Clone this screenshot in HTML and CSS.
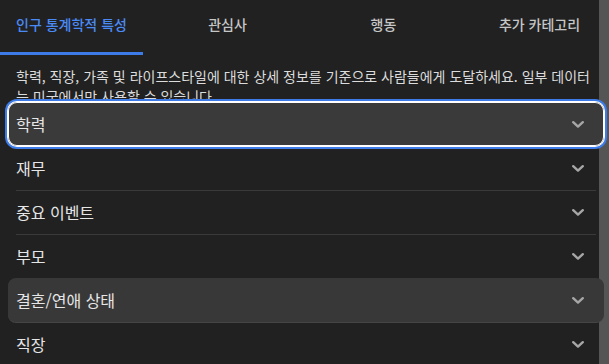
FILE: index.html
```html
<!DOCTYPE html>
<html lang="ko">
<head>
<meta charset="utf-8">
<title>카테고리</title>
<link rel="stylesheet" href="styles.css">
</head>
<body>
<div class="app">
  <div class="scrollbar"></div>
  <div class="panel">
    <nav class="tabs">
      <div class="tab active">인구 통계학적 특성</div>
      <div class="tab">관심사</div>
      <div class="tab">행동</div>
      <div class="tab">추가 카테고리</div>
    </nav>
    <p class="desc">학력, 직장, 가족 및 라이프스타일에 대한 상세 정보를 기준으로 사람들에게 도달하세요. 일부 데이터는 미국에서만 사용할 수 있습니다.</p>
    <div class="list">
      <div class="row focused"><span class="label">학력</span><svg class="chev" viewBox="0 0 12 7"><path d="M1.2 1.2 6 5.6 10.8 1.2"/></svg></div>
      <div class="row"><span class="label">재무</span><svg class="chev" viewBox="0 0 12 7"><path d="M1.2 1.2 6 5.6 10.8 1.2"/></svg></div>
      <div class="row sep"><span class="label">중요 이벤트</span><svg class="chev" viewBox="0 0 12 7"><path d="M1.2 1.2 6 5.6 10.8 1.2"/></svg></div>
      <div class="row sep"><span class="label">부모</span><svg class="chev" viewBox="0 0 12 7"><path d="M1.2 1.2 6 5.6 10.8 1.2"/></svg></div>
      <div class="row hover"><span class="label">결혼/연애 상태</span><svg class="chev" viewBox="0 0 12 7"><path d="M1.2 1.2 6 5.6 10.8 1.2"/></svg></div>
      <div class="row"><span class="label">직장</span><svg class="chev" viewBox="0 0 12 7"><path d="M1.2 1.2 6 5.6 10.8 1.2"/></svg></div>
    </div>
  </div>
</div>
</body>
</html>
```
FILE: styles.css
```css
html, body {
  margin: 0;
  padding: 0;
  background: #212121;
}
body {
  font-family: "Noto Sans CJK KR", "Noto Sans", sans-serif;
  color: #e4e4e4;
  overflow: hidden;
}
.app {
  position: relative;
  width: 609px;
  height: 364px;
  overflow: hidden;
}
.scrollbar {
  position: absolute;
  top: 0;
  right: 0;
  bottom: 0;
  width: 10px;
  background: #555555;
}
.panel {
  position: relative;
  display: flex;
  flex-direction: column;
}
.tabs {
  display: grid;
  grid-template-columns: repeat(4, 143px);
  column-gap: 13px;
  height: 55px;
}
.tab {
  box-sizing: border-box;
  height: 55px;
  padding-top: 14px;
  text-align: center;
  font-size: 14px;
  line-height: 20px;
  font-weight: 500;
  color: #c6c6c6;
  white-space: nowrap;
  border-bottom: 3px solid transparent;
}
.tab.active {
  color: #4a8af5;
  border-bottom-color: #3d7be8;
}
.desc {
  margin: 0;
  box-sizing: border-box;
  height: 47px;
  overflow: hidden;
  padding: 11px 15px 0 16px;
  font-size: 14px;
  line-height: 20px;
  color: #dcdcdc;
}
.list {
  display: flex;
  flex-direction: column;
  width: 596px;
  margin-left: 8px;
}
.row {
  position: relative;
  box-sizing: border-box;
  height: 44px;
  display: flex;
  align-items: center;
  justify-content: space-between;
  padding: 0 20px 0 8px;
  border-radius: 8px;
  font-size: 16px;
  color: #e6e6e6;
}
.row.sep {
  background: linear-gradient(#3a3a3a, #3a3a3a) no-repeat 8px 0 / calc(100% - 16px) 1px;
}
.row.focused {
  background: #3a3a3a;
  border-radius: 9px;
  box-shadow: inset 0 0 0 1px #ffffff, 0 0 0 1px #ffffff, 0 0 0 3px #3d7be8;
  z-index: 1;
}
.row.hover {
  background: #383838;
  box-shadow: 0 1px 0 #454545;
}
.label {
  line-height: 22px;
}
.chev {
  width: 12px;
  height: 7px;
  fill: none;
  stroke: #a6a6a6;
  stroke-width: 2.4;
  stroke-linecap: round;
  stroke-linejoin: round;
}
```
